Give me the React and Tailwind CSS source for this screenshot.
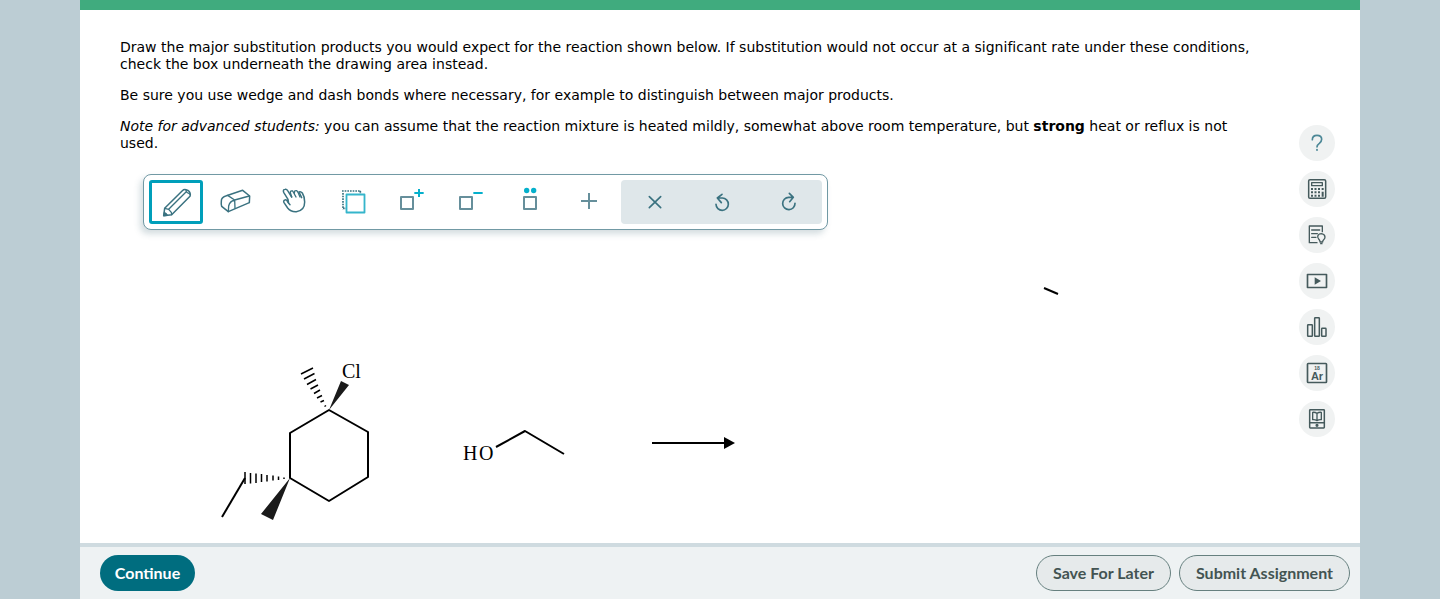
import React from "react";

const tools = [
  {
    label: "Draw bond",
    box: "66 48 108 108",
    art: (
      <g strokeWidth="4.5">
        <path d="M83 143 L86 121 L139 68 Q144 63 150 65 Q163 68 163 80 L162 85 L107 140 Z" />
        <path d="M86 121 L98 124 L106 133 L107 140 M98 124 L150 72 M150 65 Q150 72 154 74 Q160 76 163 80" strokeWidth="4" />
        <path d="M83 143 L84 133 Q92 134 95 141 Z" fill="currentColor" strokeWidth="2" />
      </g>
    ),
  },
  {
    label: "Erase",
    box: "243 48 108 108",
    art: (
      <g strokeWidth="4.5">
        <path d="M256 99 Q256 88 269 84 L320 67 L341 84 L340 104 L277 131 L257 115 Q255 107 256 99 Z" />
        <path d="M275 82 L296 96 Q281 100 278 114 L277 131 M296 96 L340 84 M296 96 L297 121" strokeWidth="4" />
      </g>
    ),
  },
  {
    label: "Move",
    box: "420 48 108 108",
    art: (
      <g strokeWidth="4.5">
        <path d="M456 94 L443 73 Q440 65 447 64 Q452 63 455 68 L467 87 M456 94 L458 106 M447 96 Q441 98 444 104 L455 120 Q464 132 481 131 Q506 128 506 102 Q506 86 499 75 Q494 69 489 72 L497 89 M447 96 Q452 94 455 102 L462 110" />
        <path d="M467 87 L463 74 Q463 67 470 69 L480 87 M475 76 L476 69 Q482 65 486 73 L492 87" strokeWidth="4" />
      </g>
    ),
  },
  {
    label: "Select",
    box: "597 48 108 108",
    art: (
      <g strokeLinecap="butt">
        <path d="M618 69 H675 M621 75 V124 M621 121 H632 M673 69 V79" strokeWidth="5" strokeDasharray="5 3" />
        <rect x="631.5" y="79.5" width="54" height="54" stroke="#35b5cb" strokeWidth="5.5" />
      </g>
    ),
  },
  {
    label: "Add positive charge",
    box: "54 48 108 108",
    art: (
      <g strokeLinecap="butt" strokeWidth="6">
        <rect x="75" y="87" width="36" height="36" stroke="#668f9b" />
        <path d="M115 75 H143 M129 63 V87" stroke="#05b0cc" />
      </g>
    ),
  },
  {
    label: "Add negative charge",
    box: "231 48 108 108",
    art: (
      <g strokeLinecap="butt" strokeWidth="6">
        <rect x="252" y="87" width="36" height="36" stroke="#668f9b" />
        <path d="M292 75 H320" stroke="#05b0cc" />
      </g>
    ),
  },
  {
    label: "Add lone pair",
    box: "408 48 108 108",
    art: (
      <g strokeLinecap="butt">
        <rect x="444" y="87" width="36" height="36" stroke="#668f9b" strokeWidth="6" />
        <circle cx="452" cy="67.5" r="8" fill="#05b0cc" stroke="none" />
        <circle cx="473" cy="67.5" r="8" fill="#05b0cc" stroke="none" />
      </g>
    ),
  },
  {
    label: "More tools",
    box: "585 48 108 108",
    art: <path d="M615 99 H663 M639 75 V123" strokeWidth="6" strokeLinecap="butt" stroke="#668f9b" />,
  },
];

const actions = [
  { label: "Clear", box: "81 48 105 108", art: <path d="M118 86 L152 119 M152 86 L118 119" strokeWidth="5" /> },
  {
    label: "Undo",
    box: "282 48 105 108",
    art: <path d="M318 109 A18.5 18.5 0 1 0 337 90 H322 M336 79 L322 90 L334 104" strokeWidth="5" />,
  },
  {
    label: "Redo",
    box: "483 48 105 108",
    art: <path d="M555 106 A18.5 18.5 0 1 1 536 88 H550 M538 76 L550 88 L539 101" strokeWidth="5" />,
  },
];

const resources = [
  {
    label: "Help",
    box: "27 30 108 108",
    art: (
      <g stroke="#4b8796" strokeWidth="5">
        <path d="M67 74 Q67 61 81 61 Q95 61 95 73 Q95 79 88 85 Q81 90 81 96" />
        <path d="M81 104 V105" strokeWidth="5.5" />
      </g>
    ),
  },
  {
    label: "Calculator",
    box: "27 168 108 108",
    art: (
      <g>
        <rect x="56" y="194" width="51" height="56" rx="4" strokeWidth="4.5" />
        <rect x="65" y="203" width="32" height="9" strokeWidth="4" />
        <path d="M63 222 H91 M63 232 H91 M63 242 H91" strokeWidth="6" strokeDasharray="6 4.5" strokeLinecap="butt" />
        <path d="M98 219 V225 M98 230 V245" strokeWidth="6" strokeLinecap="butt" />
      </g>
    ),
  },
  {
    label: "Hints",
    box: "27 306 108 108",
    art: (
      <g strokeWidth="4">
        <path d="M81 383 H58 V333 H97 V350" />
        <path d="M65 345 H89 M65 356 H82 M65 367 H78" />
        <path d="M90 379 Q89 375 86 372 Q81 367 84 361 Q87 356 94 356 Q104 357 105 366 Q105 371 101 374 Q98 377 98 380 M90 381 H98 M92 386 H96" />
      </g>
    ),
  },
  {
    label: "Video",
    box: "27 -6 108 108",
    art: (
      <g>
        <rect x="52.5" y="28.5" width="57" height="39" strokeWidth="5" />
        <path d="M74 37 L93 48 L74 59 Z" fill="currentColor" stroke="none" />
      </g>
    ),
  },
  {
    label: "Data",
    box: "27 132 108 108",
    art: (
      <g strokeWidth="4.5">
        <rect x="53" y="179" width="14" height="35" rx="2" />
        <rect x="74" y="158" width="14" height="56" rx="2" />
        <rect x="95" y="190" width="13" height="24" rx="2" />
      </g>
    ),
  },
  {
    label: "Periodic table",
    box: "27 270 108 108",
    art: (
      <g>
        <rect x="52.5" y="295.5" width="57" height="57" rx="2" strokeWidth="5" />
        <text x="81" y="315" textAnchor="middle" fontSize="15" fontWeight="700" fill="currentColor" stroke="none">18</text>
        <text x="81" y="345" textAnchor="middle" fontSize="33" fontWeight="700" fill="currentColor" stroke="none">Ar</text>
      </g>
    ),
  },
  {
    label: "Textbook",
    box: "27 408 108 108",
    art: (
      <g strokeWidth="4.5">
        <rect x="59" y="434" width="44" height="55" rx="2" />
        <path d="M59 473 H103" />
        <path d="M81 445 Q75 441 68 442 V464 Q75 463 81 467 Q87 463 94 464 V442 Q87 441 81 445 V466" strokeWidth="4" />
        <circle cx="81" cy="481" r="2.5" />
      </g>
    ),
  },
];

function Icon({ box, className, children }) {
  return (
    <svg viewBox={box} className={className} fill="none" stroke="currentColor" strokeLinecap="round" strokeLinejoin="round" aria-hidden="true">
      {children}
    </svg>
  );
}

function Toolbar() {
  return (
    <div role="toolbar" aria-label="Drawing tools" className="mt-[22px] ml-[23px] flex w-fit gap-[5px] rounded-lg border border-[#7199a4] bg-white p-[5px] text-[#3a7280] shadow-[-3px_4px_6px_rgba(60,100,115,0.22)]">
      {tools.map((tool, i) => (
        <button
          key={tool.label}
          type="button"
          aria-label={tool.label}
          aria-pressed={i === 0}
          className={
            i === 0
              ? "flex h-11 w-[54px] items-center justify-center rounded-[3px] border-3 border-[#009fba]"
              : "flex h-11 w-[54px] items-center justify-center rounded-[3px]"
          }
        >
          <Icon box={tool.box} className="size-9 shrink-0">{tool.art}</Icon>
        </button>
      ))}
      <div className="flex rounded bg-[#dfe7ea]">
        {actions.map((action) => (
          <button key={action.label} type="button" aria-label={action.label} className="flex h-11 w-[67px] items-center justify-center">
            <Icon box={action.box} className="h-9 w-[35px] shrink-0">{action.art}</Icon>
          </button>
        ))}
      </div>
    </div>
  );
}

function Reaction() {
  return (
    <svg viewBox="120 230 1000 300" className="h-[300px] w-[1000px] max-w-full" fill="none" stroke="#000" strokeWidth="2" strokeLinecap="round" strokeLinejoin="round" role="img" aria-label="Reaction scheme">
      <path d="M329 410 L368 432 V477 L329 501 L290 478 V433 Z" />
      <path d="M329 410 L341 381 L349 385 Z M290 478 L261 514 L273 520 Z" fill="#1a1a1a" stroke="none" />
      <path
        d="M301 374 L313 368 M304 379 L314.500 373.500 M307 384.500 L316 379.500 M310.500 389 L318 385 M314 393.500 L320 390 M317 398 L322 395.500 M320.500 402 L324 400.500 M324.500 406.500 L326 405.500"
        strokeWidth="1.5"
        strokeLinecap="butt"
      />
      <path
        d="M245 472 V484 M250.500 473 V483.500 M256 473.500 V483 M261.500 474 V482 M267 475 V481.500 M273 475.500 V480.500 M278.500 476.500 V480 M284 477.500 V479"
        strokeWidth="1.5"
        strokeLinecap="butt"
      />
      <path d="M245 478 L222 517" strokeLinecap="butt" />
      <path d="M496 447 L525 431 L564 454" strokeLinecap="butt" />
      <path d="M652 443 H726" strokeLinecap="butt" />
      <path d="M724 437 L735 443 L724 449 Z" fill="#000" stroke="none" />
      <path d="M1044 288 L1058 294" strokeLinecap="butt" />
      <g fill="#000" stroke="none" fontSize="20" className="font-['Liberation_Serif',serif]">
        <text x="342" y="378">Cl</text>
        <text x="463" y="460">H</text>
        <text x="479" y="460">O</text>
      </g>
    </svg>
  );
}

export default function App() {
  return (
    <div className="min-h-screen bg-[#bccdd4] px-20">
      <div className="flex min-h-screen flex-col border-t-10 border-[#40ab7e] bg-white">
        <main className="flex flex-1 gap-[39px] pr-[25px] pl-10">
          <div className="min-w-0 flex-1 pt-[29px] font-['DejaVu_Sans',sans-serif] text-sm leading-[17px] text-black [font-variant-ligatures:none]">
            <div className="space-y-3.5">
              <p>
                Draw the major substitution products you would expect for the reaction shown below. If substitution would not occur at a significant rate under these conditions, check the box underneath the drawing area instead.
              </p>
              <p>Be sure you use wedge and dash bonds where necessary, for example to distinguish between major products.</p>
              <p>
                <em>Note for advanced students:</em> you can assume that the reaction mixture is heated mildly, somewhat above room temperature, but <strong>strong</strong> heat or reflux is not used.
              </p>
            </div>
            <Toolbar />
            <Reaction />
          </div>
          <nav aria-label="Resources" className="flex flex-col gap-2.5 pt-[115px] font-['Liberation_Sans',sans-serif] text-[#455a5c]">
            {resources.map((item) => (
              <button key={item.label} type="button" aria-label={item.label} className="size-9 rounded-full bg-[#f0f2f2]">
                <Icon box={item.box} className="size-9">{item.art}</Icon>
              </button>
            ))}
          </nav>
        </main>
        <footer className="flex items-start gap-2 border-t-4 border-[#cfdbe0] bg-[#eef2f3] px-2.5 py-2 pl-5 font-[Lato,sans-serif] text-base font-bold">
          <button type="button" className="mr-auto h-9 w-[95px] rounded-full bg-[#006d7f] text-white">Continue</button>
          <button type="button" className="h-9 w-[135px] rounded-full border border-[#66807f] bg-[#e6eaeb] text-[#435452]">Save For Later</button>
          <button type="button" className="h-9 w-[171px] rounded-full border border-[#66807f] bg-[#e6eaeb] text-[#435452]">Submit Assignment</button>
        </footer>
      </div>
    </div>
  );
}
